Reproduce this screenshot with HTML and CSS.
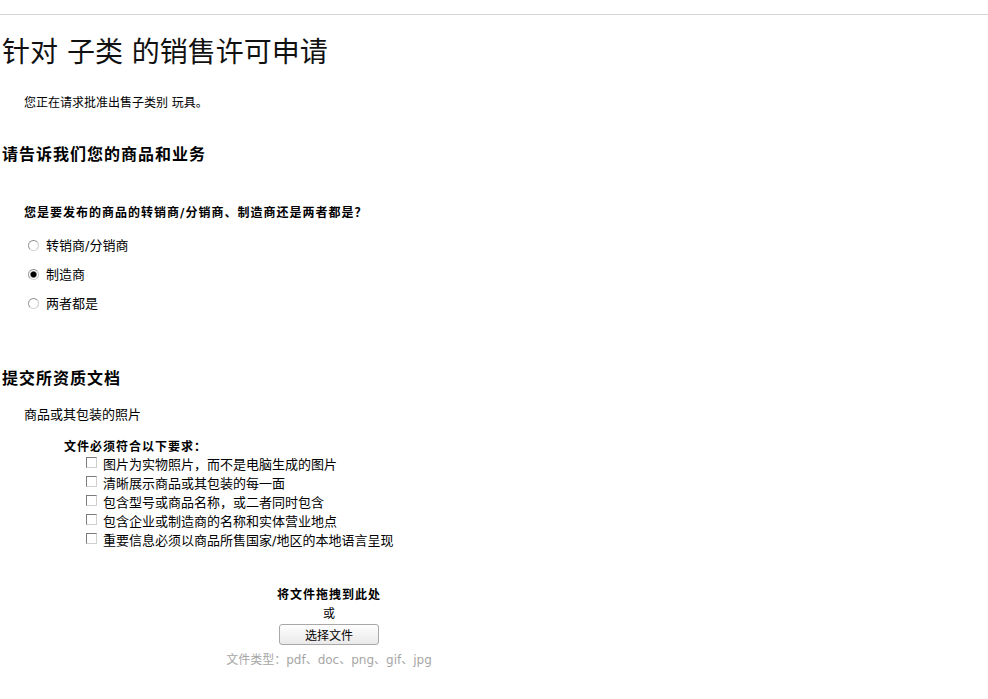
FILE: index.html
```html
<!DOCTYPE html>
<html lang="zh-CN">
<head>
<meta charset="utf-8">
<title>销售许可申请</title>
<link rel="stylesheet" href="styles.css">
</head>
<body>
<div class="topbar"></div>
<h1 class="title">针对 子类 的销售许可申请</h1>
<p class="intro">您正在请求批准出售子类别 玩具。</p>

<h2 class="section section-first">请告诉我们您的商品和业务</h2>
<p class="question">您是要发布的商品的转销商/分销商、制造商还是两者都是？</p>
<div class="radios">
  <label class="radio-row"><input type="radio" name="role" class="radio"><span>转销商/分销商</span></label>
  <label class="radio-row"><input type="radio" name="role" class="radio" checked><span>制造商</span></label>
  <label class="radio-row"><input type="radio" name="role" class="radio"><span>两者都是</span></label>
</div>

<h2 class="section section-second">提交所资质文档</h2>
<p class="doc-label">商品或其包装的照片</p>
<div class="reqs">
  <p class="reqs-title">文件必须符合以下要求：</p>
  <ul class="reqs-list">
    <li class="req"><input type="checkbox" class="check"><span>图片为实物照片，而不是电脑生成的图片</span></li>
    <li class="req"><input type="checkbox" class="check"><span>清晰展示商品或其包装的每一面</span></li>
    <li class="req"><input type="checkbox" class="check"><span>包含型号或商品名称，或二者同时包含</span></li>
    <li class="req"><input type="checkbox" class="check"><span>包含企业或制造商的名称和实体营业地点</span></li>
    <li class="req"><input type="checkbox" class="check"><span>重要信息必须以商品所售国家/地区的本地语言呈现</span></li>
  </ul>
</div>

<div class="drop">
  <p class="drop-title">将文件拖拽到此处</p>
  <p class="drop-or">或</p>
  <button class="drop-btn" type="button">选择文件</button>
  <p class="drop-types">文件类型：pdf、doc、png、gif、jpg</p>
</div>
</body>
</html>
```

FILE: styles.css
```css
html, body {
  margin: 0;
  padding: 0;
  background: #ffffff;
}

body {
  font-family: "DejaVu Sans", "Noto Sans CJK SC", sans-serif;
  font-size: 12px;
  color: #000000;
}

p, h1, h2, ul {
  margin: 0;
  padding: 0;
}

.topbar {
  height: 14px;
  border-bottom: 1px solid #d6d6d6;
}

.title {
  margin: 24px 0 0 2px;
  font-size: 28px;
  line-height: 28px;
  font-weight: normal;
  color: #111111;
}

.intro {
  margin: 28px 0 0 24px;
  font-size: 12px;
  line-height: 16px;
}

.section {
  margin-left: 2px;
  font-size: 16px;
  line-height: 20px;
  font-weight: bold;
  letter-spacing: 1px;
}

.section-first {
  margin-top: 34px;
}

.section-second {
  margin-top: 51px;
}

.question {
  margin: 40px 0 0 24px;
  font-size: 12px;
  line-height: 16px;
  font-weight: bold;
  letter-spacing: 1px;
}

.radios {
  margin: 10px 0 0 28px;
  display: flex;
  flex-direction: column;
}

.radio-row {
  height: 29px;
  display: flex;
  align-items: center;
  gap: 7px;
  font-size: 13px;
  line-height: 16px;
}

.radio {
  appearance: none;
  -webkit-appearance: none;
  margin: 0;
  width: 11px;
  height: 11px;
  border-radius: 50%;
  border: 1px solid;
  border-color: #8a8a8a #c9c9c9 #d6d6d6 #9a9a9a;
  background: #ffffff;
  flex: none;
}

.radio:checked {
  background: radial-gradient(circle, #000000 0, #000000 2.5px, #9a9a9a 3.2px, #ffffff 3.8px);
}

.doc-label {
  margin: 18px 0 0 24px;
  font-size: 13px;
  line-height: 16px;
}

.reqs {
  margin-left: 64px;
}

.reqs-title {
  margin-top: 16px;
  font-size: 12px;
  line-height: 16px;
  font-weight: bold;
  letter-spacing: 1px;
}

.reqs-list {
  list-style: none;
  padding-left: 22px;
}

.req {
  height: 19px;
  display: flex;
  align-items: center;
  gap: 6px;
  font-size: 13px;
  line-height: 16px;
}

.check {
  appearance: none;
  -webkit-appearance: none;
  margin: 0;
  width: 11px;
  height: 11px;
  border: 1px solid;
  border-color: #7c7c7c #cfcfcf #cfcfcf #7c7c7c;
  background: #ffffff;
  flex: none;
  position: relative;
  top: -2px;
}

.drop {
  width: 610px;
  margin: 36px 0 0 24px;
  text-align: center;
}

.drop-title {
  font-size: 12px;
  line-height: 19px;
  font-weight: bold;
  letter-spacing: 1px;
}

.drop-or {
  font-size: 12px;
  line-height: 19px;
}

.drop-btn {
  display: block;
  margin: 0 auto;
  width: 100px;
  height: 21px;
  padding: 0;
  font-family: inherit;
  font-size: 12px;
  color: #000000;
  border: 1px solid #a8a8a8;
  border-radius: 3px;
  background: linear-gradient(#fefefe, #e9e9e9);
}

.drop-types {
  margin-top: 6px;
  font-size: 12px;
  line-height: 19px;
  color: #a6a6a6;
}
```
